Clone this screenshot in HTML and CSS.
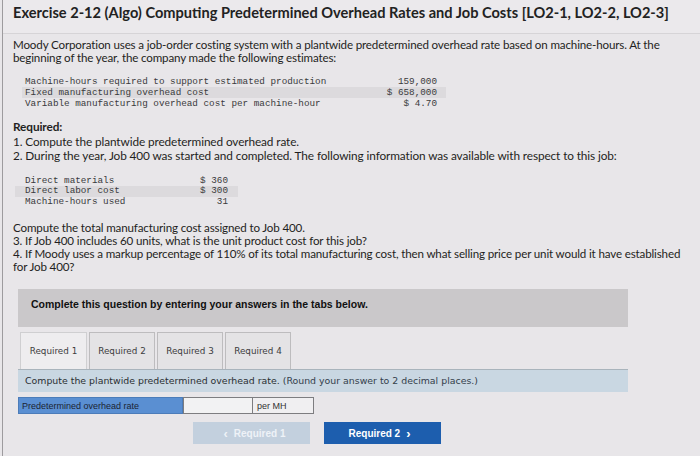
FILE: index.html
```html
<!DOCTYPE html>
<html>
<head>
<meta charset="utf-8">
<link rel="stylesheet" href="styles.css">
</head>
<body>
<div class="frame">
  <div class="title">Exercise 2-12 (Algo) Computing Predetermined Overhead Rates and Job Costs [LO2-1, LO2-2, LO2-3]</div>
  <div class="content">
    <p class="intro">Moody Corporation uses a job-order costing system with a plantwide predetermined overhead rate based on machine-hours. At the beginning of the year, the company made the following estimates:</p>
    <div class="table t1">
      <div class="row"><span>Machine-hours required to support estimated production</span><span>159,000</span></div>
      <div class="row alt"><span>Fixed manufacturing overhead cost</span><span>$ 658,000</span></div>
      <div class="row"><span>Variable manufacturing overhead cost per machine-hour</span><span>$ 4.70</span></div>
    </div>
    <div class="req">
      <div class="b">Required:</div>
      <div>1. Compute the plantwide predetermined overhead rate.</div>
      <div>2. During the year, Job 400 was started and completed. The following information was available with respect to this job:</div>
    </div>
    <div class="table t2">
      <div class="row"><span>Direct materials</span><span>$ 360</span></div>
      <div class="row alt"><span>Direct labor cost</span><span>$ 300</span></div>
      <div class="row"><span>Machine-hours used</span><span>31</span></div>
    </div>
    <div class="more">
      <div>Compute the total manufacturing cost assigned to Job 400.</div>
      <div>3. If Job 400 includes 60 units, what is the unit product cost for this job?</div>
      <div>4. If Moody uses a markup percentage of 110% of its total manufacturing cost, then what selling price per unit would it have established for Job 400?</div>
    </div>
    <div class="notice">Complete this question by entering your answers in the tabs below.</div>
    <div class="tabs">
      <div class="tab active">Required 1</div>
      <div class="tab">Required 2</div>
      <div class="tab">Required 3</div>
      <div class="tab">Required 4</div>
    </div>
    <div class="panel">Compute the plantwide predetermined overhead rate. <span class="hint">(Round your answer to 2 decimal places.)</span></div>
    <div class="answer">
      <div class="label">Predetermined overhead rate</div>
      <div class="input"></div>
      <div class="unit">per MH</div>
    </div>
    <div class="nav">
      <div class="btn prev"><span class="chev">&lsaquo;</span> Required 1</div>
      <div class="btn next">Required 2 <span class="chev">&rsaquo;</span></div>
    </div>
  </div>
</div>
</body>
</html>
```
FILE: styles.css
```css
* { box-sizing: border-box; }
html, body { margin: 0; padding: 0; }
body {
  background: #e8e6e9;
  font-family: Lato, "Liberation Sans", sans-serif;
  color: #1f1f22;
  width: 700px;
  height: 456px;
  overflow: hidden;
}
.frame {
  margin-left: 2px;
  border-left: 1px solid #9d9b9e;
  height: 456px;
}
.title {
  height: 34px;
  line-height: 26px;
  padding-left: 10px;
  font-weight: 700;
  font-size: 14.6px;
  letter-spacing: 0;
  color: #222;
  border-bottom: 1px solid #d6d4d7;
  background: #ebe9ec;
  white-space: nowrap;
}
.content {
  padding-left: 10px;
}
.intro {
  margin: 4px 0 0 0;
  font-size: 11.6px;
  letter-spacing: -0.15px;
  line-height: 13px;
  padding-right: 6px;
}
.table {
  font-family: "Liberation Mono", monospace;
  font-size: 9.3px;
  color: #3a3a3c;
}
.row {
  display: flex;
  justify-content: space-between;
  white-space: nowrap;
}
.row.alt { background: #dcdadd; }
.t1 {
  margin: 12px 0 0 9px;
  width: 424px;
}
.t1 .row { height: 11px; line-height: 11px; padding: 0 9px 0 3px; }
.t2 {
  margin: 12px 0 0 2px;
  width: 223px;
}
.t2 .row { height: 10.5px; line-height: 10.5px; padding: 0 10px 0 10px; }
.req {
  margin-top: 11px;
  font-size: 11.8px;
  letter-spacing: -0.1px;
  line-height: 14.5px;
}
.req .b { font-weight: 700; }
.more {
  margin-top: 13.5px;
  font-size: 11.6px;
  letter-spacing: -0.15px;
  line-height: 13px;
  padding-right: 6px;
}
.notice {
  margin: 16.5px 0 0 5px;
  width: 610px;
  height: 38px;
  background: #cac8ca;
  font-family: "Liberation Sans", sans-serif;
  font-weight: 700;
  font-size: 10.5px;
  color: #111;
  padding: 9px 0 0 13px;
}
.tabs {
  display: flex;
  margin: 5px 0 0 7px;
  height: 37px;
  gap: 2px;
}
.tab {
  width: 66px;
  height: 37px;
  border: 1px solid #bdbcbe;
  border-bottom: none;
  background: #e4e3e5;
  font-family: "DejaVu Sans", Verdana, sans-serif;
  font-size: 8.8px;
  color: #3c3c3e;
  display: flex;
  align-items: center;
  justify-content: center;
  padding-bottom: 1px;
}
.tab.active {
  background: #eeedef;
  border-color: #cfcfd1;
  width: 67px;
}
.panel {
  margin-left: 5px;
  width: 610px;
  height: 23px;
  background: #c9d7e2;
  border-top: 1px solid #a9b4bc;
  font-family: "DejaVu Sans", Verdana, sans-serif;
  font-size: 9.4px;
  color: #2b2f33;
  padding: 5px 0 0 7px;
  white-space: nowrap;
}
.hint { color: #34404b; }
.answer {
  display: flex;
  margin: 5px 0 0 5px;
  height: 17px;
  font-family: "Liberation Sans", sans-serif;
  font-size: 9px;
}
.label {
  width: 165px;
  background: #5a8fd2;
  color: #1a2433;
  padding: 3px 0 0 3px;
  border: 1px solid #4c7cb9;
}
.input {
  width: 69px;
  background: #f2f2f3;
  border: 1px solid #7d7d80;
  border-right: none;
}
.unit {
  width: 62px;
  background: #f0eff1;
  border: 1px solid #7d7d80;
  padding: 3px 0 0 4px;
  color: #333;
}
.nav {
  display: flex;
  margin: 8px 0 0 180px;
  gap: 14px;
}
.btn {
  width: 117px;
  height: 22px;
  display: flex;
  align-items: center;
  justify-content: center;
  font-family: "Liberation Sans", sans-serif;
  font-weight: 700;
  font-size: 10px;
}
.btn .chev { font-size: 13px; margin: 0 6px; line-height: 1; }
.prev { background: #c3d0de; color: #eef2f7; }
.next { background: #1d5eae; color: #ffffff; }
```
